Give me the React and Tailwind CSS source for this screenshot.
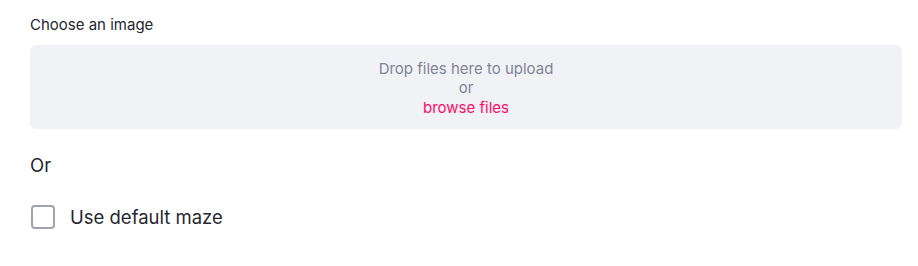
import { useState } from 'react';

export default function App() {
  const [checked, setChecked] = useState(false);

  return (
    <div className="w-[918px] h-[266px] bg-white pl-[30px] pr-[16px] pt-[15px] text-[#262730]" style={{ fontFamily: 'Inter, "Noto Sans", sans-serif' }}>
      <div className="text-[15px] leading-[20px] h-[20px]">Choose an image</div>
      <div className="mt-[10px] h-[84px] rounded-[6px] bg-[#f0f2f6] flex flex-col items-center justify-center text-[15px] leading-[19.5px] pt-[2px]">
        <span className="text-[#808495]">Drop files here to upload</span>
        <span className="text-[#808495]">or</span>
        <button className="text-[#ff0a66] leading-[19.5px]">browse files</button>
      </div>
      <div className="mt-[24px] text-[18.5px] leading-[24px]">Or</div>
      <label className="mt-[28px] flex items-center gap-[15px] cursor-pointer">
        <span
          onClick={() => setChecked(!checked)}
          className={`ml-[1px] w-[24px] h-[24px] rounded-[4px] border-2 ${checked ? 'bg-[#ff0a66] border-[#ff0a66]' : 'border-[#9ea2b2] bg-white'}`}
        />
        <span className="text-[18.5px] leading-[24px]">Use default maze</span>
      </label>
    </div>
  );
}
